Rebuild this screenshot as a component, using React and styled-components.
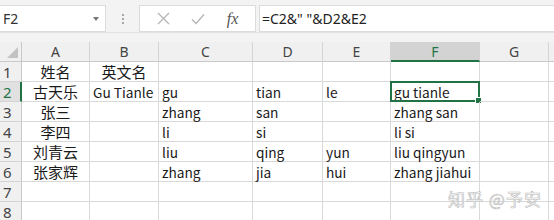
import styled, { createGlobalStyle } from 'styled-components';

const GlobalStyle = createGlobalStyle`
  html, body {
    margin: 0;
    padding: 0;
    background: #ffffff;
  }
  body {
    width: 554px;
    height: 220px;
    overflow: hidden;
    font-family: "Noto Sans CJK SC", "Noto Sans", sans-serif;
  }
`;

const COLS = [
  { key: 'A', width: 68 },
  { key: 'B', width: 69 },
  { key: 'C', width: 94 },
  { key: 'D', width: 70 },
  { key: 'E', width: 68 },
  { key: 'F', width: 89 },
  { key: 'G', width: 69 },
  { key: 'H', width: 40 },
];

const ROWS = [
  { A: '姓名', B: '英文名' },
  { A: '古天乐', B: 'Gu Tianle', C: 'gu', D: 'tian', E: 'le', F: 'gu tianle' },
  { A: '张三', C: 'zhang', D: 'san', F: 'zhang san' },
  { A: '李四', C: 'li', D: 'si', F: 'li si' },
  { A: '刘青云', C: 'liu', D: 'qing', E: 'yun', F: 'liu qingyun' },
  { A: '张家辉', C: 'zhang', D: 'jia', E: 'hui', F: 'zhang jiahui' },
  {},
  {},
];

const isCjk = (text) => /[\u4e00-\u9fff]/.test(text || '');

const Page = styled.div`
  width: 554px;
  height: 220px;
  overflow: hidden;
  position: relative;
  background: #f3f3f3;
`;

const FormulaBar = styled.div`
  display: flex;
  align-items: stretch;
  height: 27px;
  padding-top: 5px;
  border-bottom: 1px solid #e2e2e2;
`;

const NameBox = styled.div`
  width: 106px;
  display: flex;
  align-items: center;
  justify-content: space-between;
  background: #ffffff;
  border: 1px solid #dcdcdc;
  border-left: none;
  padding: 0 6px 0 3px;
  box-sizing: border-box;
  font-family: "Noto Sans", sans-serif;
  font-size: 14px;
  color: #333;
`;

const Caret = styled.span`
  width: 0;
  height: 0;
  border-left: 3px solid transparent;
  border-right: 3px solid transparent;
  border-top: 4px solid #777;
`;

const Grip = styled.div`
  width: 33px;
  display: flex;
  flex-direction: column;
  align-items: center;
  justify-content: center;
  gap: 2px;
  & span {
    width: 2px;
    height: 2px;
    background: #a8a8a8;
  }
`;

const ButtonGroup = styled.div`
  width: 117px;
  display: flex;
  align-items: center;
  justify-content: space-around;
  background: #ffffff;
  border: 1px solid #dcdcdc;
  box-sizing: border-box;
  padding: 0 6px;
`;

const Fx = styled.span`
  font-family: "Liberation Serif", serif;
  font-style: italic;
  font-size: 16px;
  color: #555;
`;

const Formula = styled.div`
  flex: 1;
  margin-left: 3px;
  display: flex;
  align-items: center;
  padding-left: 2px;
  background: #ffffff;
  border: 1px solid #dcdcdc;
  border-right: none;
  font-family: "Noto Sans", sans-serif;
  font-size: 14px;
  color: #222;
  white-space: pre;
`;

const Sheet = styled.div`
  margin-top: 9px;
  display: grid;
  grid-template-columns: 22px ${COLS.map((c) => `${c.width}px`).join(' ')};
  grid-auto-rows: 20px;
  background: #ffffff;
`;

const Corner = styled.div`
  position: relative;
  background: #f0f0f0;
  border-right: 1px solid #c9c9c9;
  border-bottom: 1px solid #c9c9c9;
  &::after {
    content: '';
    position: absolute;
    right: 3px;
    bottom: 3px;
    width: 0;
    height: 0;
    border-left: 11px solid transparent;
    border-bottom: 11px solid #c2c2c2;
  }
`;

const ColHead = styled.div`
  display: flex;
  align-items: center;
  justify-content: center;
  background: ${({ $active }) => ($active ? '#d3d3d3' : '#f0f0f0')};
  border-right: 1px solid #d4d4d4;
  border-bottom: ${({ $active }) => ($active ? '2px solid #217346' : '1px solid #c9c9c9')};
  font-family: "Noto Sans", sans-serif;
  font-size: 14px;
  color: ${({ $active }) => ($active ? '#217346' : '#444')};
  box-sizing: border-box;
`;

const RowHead = styled.div`
  display: flex;
  align-items: center;
  padding-left: 3px;
  background: ${({ $active }) => ($active ? '#e1e1e1' : '#f0f0f0')};
  border-right: ${({ $active }) => ($active ? '2px solid #217346' : '1px solid #c9c9c9')};
  border-bottom: 1px solid #d4d4d4;
  font-family: "Noto Sans", sans-serif;
  font-size: 15px;
  color: ${({ $active }) => ($active ? '#217346' : '#444')};
  box-sizing: border-box;
`;

const Cell = styled.div`
  position: relative;
  display: flex;
  align-items: center;
  justify-content: ${({ $center }) => ($center ? 'center' : 'flex-start')};
  padding-left: ${({ $center }) => ($center ? '0' : '3px')};
  border-right: 1px solid #d9d9d9;
  border-bottom: 1px solid #d9d9d9;
  font-size: ${({ $cjk }) => ($cjk ? '15px' : '13.7px')};
  color: #1a1a1a;
  white-space: nowrap;
  box-sizing: border-box;
  overflow: visible;
`;

const Selection = styled.div`
  position: absolute;
  left: -1px;
  top: -1px;
  right: -1px;
  bottom: -1px;
  border: 2px solid #217346;
  pointer-events: none;
  &::after {
    content: '';
    position: absolute;
    right: -4px;
    bottom: -4px;
    width: 5px;
    height: 5px;
    background: #217346;
    border: 1px solid #ffffff;
  }
`;

const Watermark = styled.div`
  position: absolute;
  left: 448px;
  top: 186px;
  font-size: 17px;
  letter-spacing: 1px;
  color: rgba(255, 255, 255, 0.7);
  -webkit-text-stroke: 0.6px #b9b9b9;
`;

const CrossIcon = () => (
  <svg width="13" height="13" viewBox="0 0 13 13">
    <path d="M1 1 L12 12 M12 1 L1 12" stroke="#b5b5b5" strokeWidth="1.3" fill="none" />
  </svg>
);

const CheckIcon = () => (
  <svg width="14" height="12" viewBox="0 0 14 12">
    <path d="M1 6.5 L5 10.5 L13 1.5" stroke="#b5b5b5" strokeWidth="1.4" fill="none" />
  </svg>
);

export default function App() {
  return (
    <>
      <GlobalStyle />
      <Page>
        <FormulaBar>
          <NameBox>
            <span>F2</span>
            <Caret />
          </NameBox>
          <Grip>
            <span />
            <span />
            <span />
          </Grip>
          <ButtonGroup>
            <CrossIcon />
            <CheckIcon />
            <Fx>fx</Fx>
          </ButtonGroup>
          <Formula>=C2&amp;" "&amp;D2&amp;E2</Formula>
        </FormulaBar>
        <Sheet>
          <Corner />
          {COLS.map((c) => (
            <ColHead key={c.key} $active={c.key === 'F'}>
              {c.key === 'H' ? '' : c.key}
            </ColHead>
          ))}
          {ROWS.map((row, i) => (
            <Row key={i} index={i} row={row} />
          ))}
        </Sheet>
        <Watermark>知乎 @予安</Watermark>
      </Page>
    </>
  );
}

function Row({ index, row }) {
  const n = index + 1;
  return (
    <>
      <RowHead $active={n === 2}>{n}</RowHead>
      {COLS.map((c) => {
        const value = row[c.key];
        const center = c.key === 'A' || (c.key === 'B' && n === 1);
        return (
          <Cell key={c.key} $center={center} $cjk={isCjk(value)}>
            {value}
            {n === 2 && c.key === 'F' && <Selection />}
          </Cell>
        );
      })}
    </>
  );
}
